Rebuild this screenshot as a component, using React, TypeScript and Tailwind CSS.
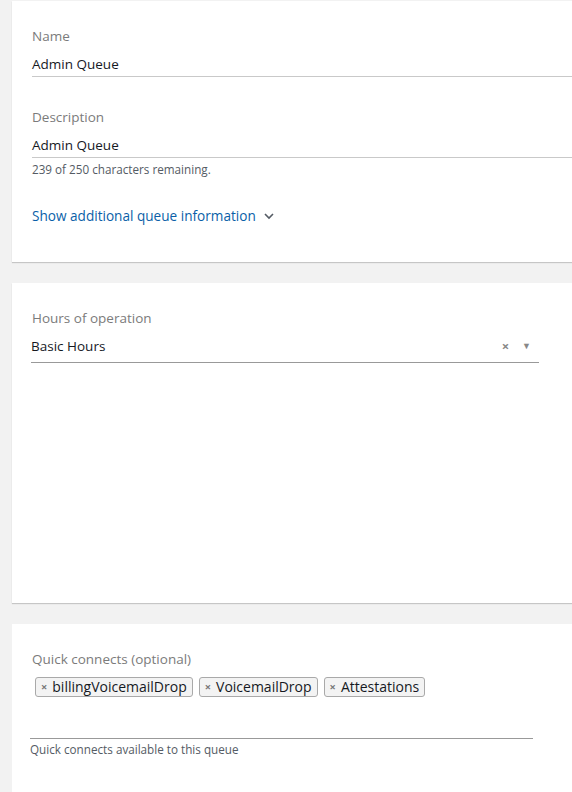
import React from "react";

const font = { fontFamily: '"Open Sans", "Noto Sans", Arial, sans-serif' };

const Field = ({ label, value }: { label: string; value: string }) => (
  <div>
    <div className="text-[13.5px] text-[#7b7b7b] leading-[18px]">{label}</div>
    <div className="mt-[10px] border-b border-[#c9c9c9] pb-[3px] text-[13.5px] leading-[18px] text-[#16191f]">
      {value}
    </div>
  </div>
);

const Chip = ({ text }: { text: string }) => (
  <span className="flex items-center gap-[5px] h-[20px] rounded-[3px] border border-[#a9a9a9] bg-[#f3f3f3] px-[5px] text-[14px] leading-[18px] text-[#16191f]">
    <span className="text-[11px] font-bold text-[#777]">×</span>
    {text}
  </span>
);

export default function App() {
  return (
    <div className="min-h-[792px] bg-[#f2f2f2] pl-[12px] pt-px" style={font}>
      {/* Queue details */}
      <section className="h-[261px] bg-white pl-[20px] pt-[26px] shadow-[0_1px_1px_rgba(0,0,0,0.18)]">
        <Field label="Name" value="Admin Queue" />
        <div className="mt-[31px]">
          <Field label="Description" value="Admin Queue" />
        </div>
        <div className="mt-[4px] text-[11.7px] leading-[14px] text-[#545b64]">239 of 250 characters remaining.</div>
        <button className="mt-[31px] flex items-center gap-[7px] text-[13.6px] leading-[18px] text-[#0a5fa8]">
          Show additional queue information
          <svg width="12" height="12" viewBox="0 0 12 12" fill="none" stroke="#545b64" strokeWidth="1.6">
            <path d="M2 4l4 4 4-4" />
          </svg>
        </button>
      </section>

      {/* Hours of operation */}
      <section className="mt-[21px] h-[320px] bg-white pl-[19px] pr-[33px] pt-[26px] shadow-[0_1px_1px_rgba(0,0,0,0.18)]">
        <div className="pl-px text-[13.5px] leading-[18px] text-[#7b7b7b]">Hours of operation</div>
        <div className="mt-[10px] flex items-center border-b border-[#999] pb-[7px] text-[13.5px] leading-[18px] text-[#16191f]">
          <span className="flex-1">Basic Hours</span>
          <span className="text-[13px] font-bold text-[#888]">×</span>
          <span className="ml-[13px] mr-[8px] text-[9px] text-[#888]">▼</span>
        </div>
      </section>

      {/* Quick connects */}
      <section className="mt-[21px] h-[168px] bg-white pl-[18px] pt-[26px]">
        <div className="pl-[2px] text-[13.5px] leading-[18px] text-[#7b7b7b]">Quick connects (optional)</div>
        <div className="mt-[9px] w-[503px] border-b border-[#999] pb-[41px]">
          <div className="flex gap-[6px] pl-[5px]">
            <Chip text="billingVoicemailDrop" />
            <Chip text="VoicemailDrop" />
            <Chip text="Attestations" />
          </div>
        </div>
        <div className="mt-[3px] text-[11.7px] leading-[14px] text-[#545b64]">Quick connects available to this queue</div>
      </section>
    </div>
  );
}
